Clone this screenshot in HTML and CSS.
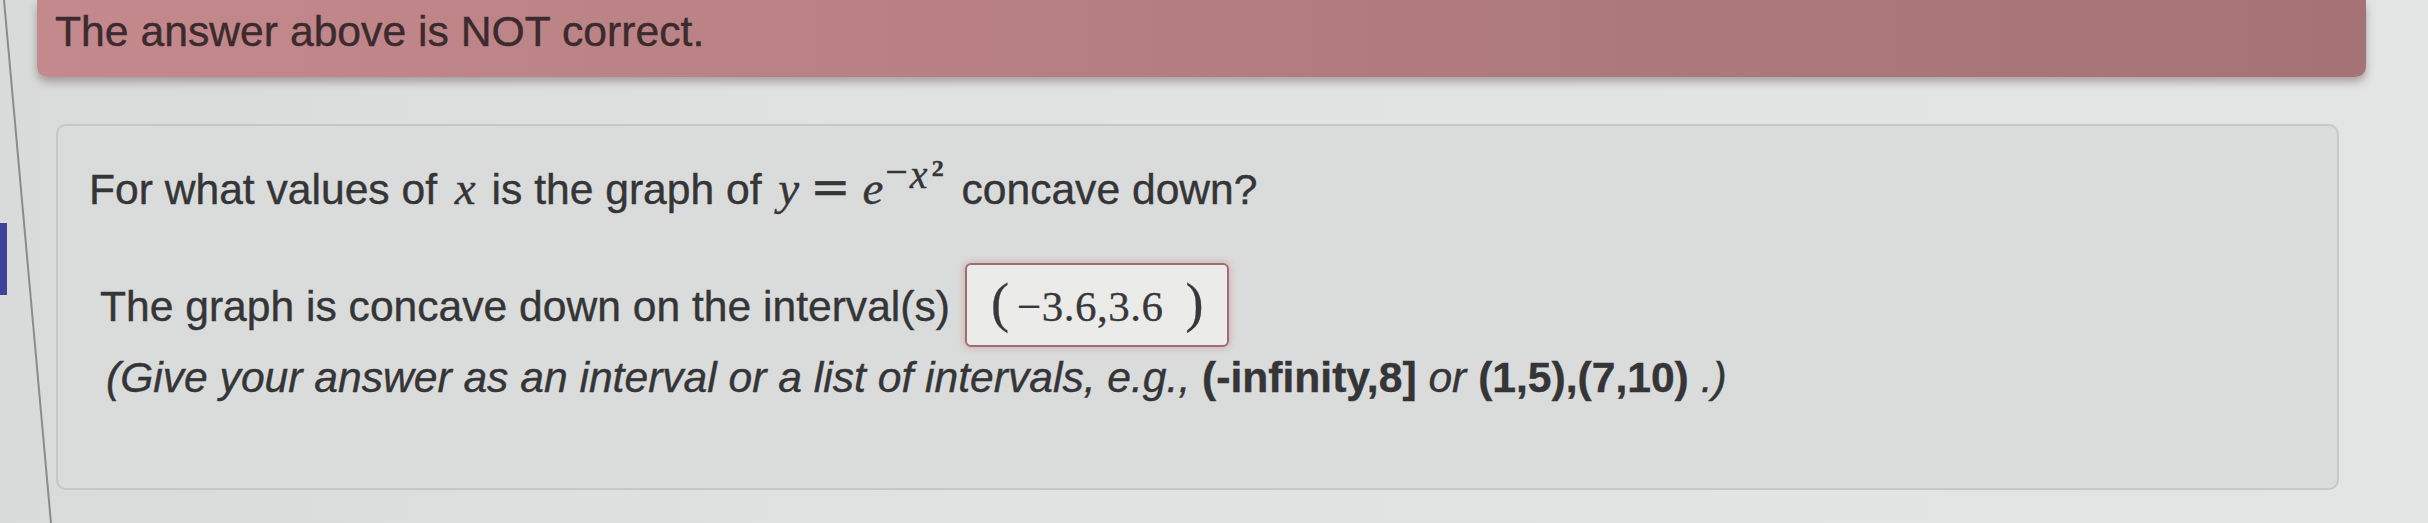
FILE: index.html
```html
<!DOCTYPE html>
<html lang="en">
<head>
<meta charset="utf-8">
<title>Concave down question</title>
<link rel="stylesheet" href="styles.css">
</head>
<body>
  <div class="rail"><div class="tab"></div></div>
  <main class="main">
    <div class="banner">The answer above is NOT correct.</div>
    <section class="panel">
      <p class="q1">For what values of <span class="mi mx">x</span> is the graph of <span class="math"><span class="mi">y</span><span class="mo">=</span><span class="mi">e</span><span class="sup"><span class="minus">−</span><span class="mi">x</span><span class="two">2</span></span></span> concave down?</p>
      <div class="row">
        <span class="label">The graph is concave down on the interval(s)</span>
        <span class="answer"><span class="paren">(</span><span class="num">−3.6,3.6</span><span class="paren close">)</span></span>
      </div>
      <p class="hint">(Give your answer as an interval or a list of intervals, e.g., <b>(-infinity,8]</b> or <b>(1,5),(7,10)</b> .)</p>
    </section>
  </main>
</body>
</html>
```

FILE: styles.css
```css
html, body {
  margin: 0;
  padding: 0;
}

body {
  width: 2428px;
  height: 523px;
  overflow: hidden;
  display: flex;
  background: linear-gradient(to right, #d9dbda 0%, #e1e3e2 40%, #e3e5e4 100%);
  font-family: "Liberation Sans", Arial, sans-serif;
  color: #353537;
  -webkit-text-stroke: 0.4px currentColor;
}

.rail {
  position: relative;
  flex: none;
  width: 30px;
  height: 523px;
}

.rail::after {
  content: "";
  position: absolute;
  left: 3px;
  top: 0;
  width: 2px;
  height: 523px;
  background: #8a8c8c;
  transform: skewX(5.13deg);
  transform-origin: top left;
}

.tab {
  margin-top: 223px;
  width: 7px;
  height: 72px;
  background: #3e4197;
}

.main {
  flex: 1;
  padding-left: 7px;
}

.banner {
  box-sizing: border-box;
  width: 2329px;
  height: 77px;
  padding: 0 18px;
  font-size: 42.7px;
  line-height: 62px;
  color: #3b2a2e;
  background: linear-gradient(to right, #c4898d 0%, #b98185 35%, #ad787b 70%, #a57376 100%);
  border-radius: 0 0 10px 10px;
  box-shadow: 0 5px 9px rgba(60, 40, 40, 0.35);
}

.panel {
  box-sizing: border-box;
  margin: 47px 0 0 19px;
  width: 2283px;
  height: 366px;
  padding: 36px 0 0 31px;
  background: #dadcdb;
  border: 2px solid #c6c8c7;
  border-radius: 10px;
  font-size: 42.6px;
}

.q1 {
  margin: 0;
  height: 50px;
  line-height: 50px;
  white-space: nowrap;
}

.mi {
  font-family: "Liberation Serif", "Times New Roman", serif;
  font-style: italic;
  font-size: 47px;
}

.mx {
  margin: 0 4px 0 6px;
}

.math {
  margin: 0 6px 0 5px;
}

.mo {
  font-family: "DejaVu Serif", "Liberation Serif", serif;
  font-size: 48px;
  margin: 0 12px 0 11px;
}

.sup {
  display: inline-block;
  line-height: 0;
  vertical-align: 16px;
  margin-left: 2px;
}

.sup .minus {
  font-family: "Liberation Serif", "Times New Roman", serif;
  font-size: 40px;
  vertical-align: 3px;
}

.sup .mi {
  font-size: 40px;
  margin-left: 2px;
}

.sup .two {
  display: inline-block;
  font-family: "Liberation Serif", "Times New Roman", serif;
  font-weight: bold;
  font-size: 24px;
  vertical-align: 12px;
  margin-left: 4px;
}

.row {
  display: flex;
  align-items: baseline;
  margin: 51px 0 0 11px;
  line-height: 50px;
}

.label {
  white-space: nowrap;
}

.answer {
  box-sizing: border-box;
  height: 84px;
  margin-left: 15px;
  padding: 3px 24px 0 24px;
  line-height: 77px;
  font-family: "Liberation Serif", "Times New Roman", serif;
  font-size: 43px;
  color: #38383a;
  background: #ebebe9;
  border: 2px solid #9d7070;
  border-radius: 6px;
  box-shadow: 0 0 6px 2px rgba(205, 120, 120, 0.35);
  white-space: nowrap;
  -webkit-text-stroke: 0.3px currentColor;
}

.paren {
  font-size: 54px;
  line-height: 0;
  margin-right: 8px;
}

.paren.close {
  margin: 0 0 0 22px;
}

.num {
  letter-spacing: 0.5px;
}

.hint {
  margin: 5px 0 0 17px;
  line-height: 50px;
  font-style: italic;
  white-space: nowrap;
}

.hint b {
  font-style: normal;
  font-weight: bold;
}
```
